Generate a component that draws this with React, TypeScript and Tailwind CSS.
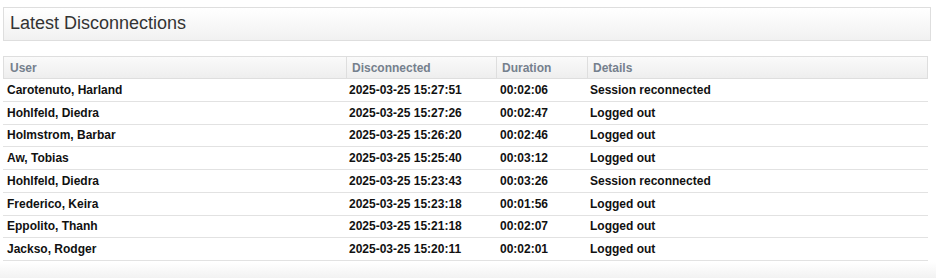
import React from "react";

const rows = [
  ["Carotenuto, Harland", "2025-03-25 15:27:51", "00:02:06", "Session reconnected"],
  ["Hohlfeld, Diedra", "2025-03-25 15:27:26", "00:02:47", "Logged out"],
  ["Holmstrom, Barbar", "2025-03-25 15:26:20", "00:02:46", "Logged out"],
  ["Aw, Tobias", "2025-03-25 15:25:40", "00:03:12", "Logged out"],
  ["Hohlfeld, Diedra", "2025-03-25 15:23:43", "00:03:26", "Session reconnected"],
  ["Frederico, Keira", "2025-03-25 15:23:18", "00:01:56", "Logged out"],
  ["Eppolito, Thanh", "2025-03-25 15:21:18", "00:02:07", "Logged out"],
  ["Jackso, Rodger", "2025-03-25 15:20:11", "00:02:01", "Logged out"],
];

export default function App() {
  return (
    <div
      className="w-[936px] h-[278px] bg-[linear-gradient(to_bottom,#ffffff_0px,#ffffff_262px,#f2f2f2_278px)] overflow-hidden"
      style={{ fontFamily: '"Liberation Sans", Arial, sans-serif' }}
    >
      <div className="pt-[7px] pl-[3px] pr-[5px]">
        <div className="h-[34px] border border-[#dedede] bg-[linear-gradient(to_bottom,#ffffff,#f1f1f1)] flex items-center pl-[6px] pb-[2px]">
          <span className="text-[18px] text-[#333333]">Latest Disconnections</span>
        </div>
      </div>
      <div className="pt-[15px] pl-[3px] pr-[8px]">
        <div className="grid grid-cols-[342px_150px_91px_1fr] h-[23px] border border-[#dedede] bg-[linear-gradient(to_bottom,#fafafa,#eeeeee)] text-[12px] font-bold text-[#75808d]">
          <div className="pl-[6px] flex items-center">User</div>
          <div className="pl-[5px] flex items-center border-l border-[#dedede]">Disconnected</div>
          <div className="pl-[5px] flex items-center border-l border-[#dedede]">Duration</div>
          <div className="pl-[5px] flex items-center border-l border-[#dedede]">Details</div>
        </div>
        {rows.map((r, i) => (
          <div
            key={i}
            className="grid grid-cols-[343px_150px_91px_1fr] h-[22.75px] border-b border-[#e2e2e2] text-[12px] font-bold text-[#111111] items-center"
          >
            <div className="pl-[4px]">{r[0]}</div>
            <div className="pl-[3px]">{r[1]}</div>
            <div className="pl-[4px]">{r[2]}</div>
            <div className="pl-[3px]">{r[3]}</div>
          </div>
        ))}
      </div>
    </div>
  );
}
